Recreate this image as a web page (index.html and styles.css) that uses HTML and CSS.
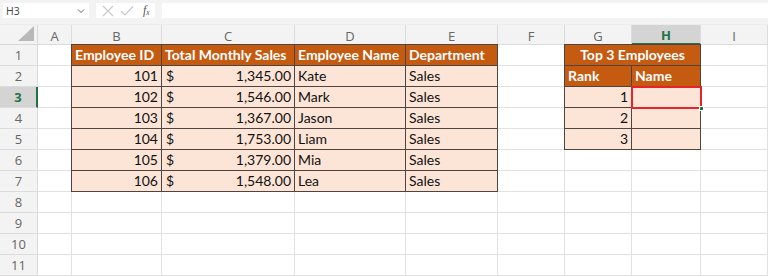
FILE: index.html
```html
<!DOCTYPE html>
<html>
<head>
<meta charset="utf-8">
<link rel="stylesheet" href="styles.css">
</head>
<body>
<div class="app">
  <div class="fbar">
    <div class="namebox"><span>H3</span>
      <svg class="chev" width="8" height="6" viewBox="0 0 8 6"><path d="M1 1.5 L4 4.5 L7 1.5" fill="none" stroke="#666" stroke-width="1"/></svg>
    </div>
    <div class="btns">
      <svg width="12" height="12" viewBox="0 0 12 12"><path d="M1 1 L11 11 M11 1 L1 11" stroke="#c8c8c8" stroke-width="1.1"/></svg>
      <svg width="14" height="12" viewBox="0 0 14 12"><path d="M1 6 L5 10 L13 1.5" fill="none" stroke="#c8c8c8" stroke-width="1.1"/></svg>
      <span class="fx"><i>f</i><sub>x</sub></span>
    </div>
    <div class="finput"></div>
  </div>
  <div class="sheet">
    <div class="corner"><svg width="16" height="15" viewBox="0 0 16 15"><path d="M16 0 L16 15 L0 15 Z" fill="#b8b8b8"/></svg></div>
    <div class="ch">A</div><div class="ch">B</div><div class="ch">C</div><div class="ch">D</div><div class="ch">E</div><div class="ch">F</div><div class="ch">G</div><div class="ch sel">H</div><div class="ch">I</div>

    <div class="rh">1</div><div class="c"></div>
    <div class="c hd b bl bt">Employee ID</div><div class="c hd b bt">Total Monthly Sales</div><div class="c hd b bt">Employee Name</div><div class="c hd b bt">Department</div>
    <div class="c"></div>
    <div class="c hd b bl bt span2 center">Top 3 Employees</div>
    <div class="c"></div>

    <div class="rh">2</div><div class="c"></div>
    <div class="c fl b bl num">101</div><div class="c fl b money"><span>$</span><span>1,345.00</span></div><div class="c fl b">Kate</div><div class="c fl b">Sales</div>
    <div class="c"></div>
    <div class="c hd b bl">Rank</div><div class="c hd b">Name</div>
    <div class="c"></div>

    <div class="rh rsel">3</div><div class="c"></div>
    <div class="c fl b bl num">102</div><div class="c fl b money"><span>$</span><span>1,546.00</span></div><div class="c fl b">Mark</div><div class="c fl b">Sales</div>
    <div class="c"></div>
    <div class="c fl b bl num">1</div><div class="c fl b"></div>
    <div class="c"></div>

    <div class="rh">4</div><div class="c"></div>
    <div class="c fl b bl num">103</div><div class="c fl b money"><span>$</span><span>1,367.00</span></div><div class="c fl b">Jason</div><div class="c fl b">Sales</div>
    <div class="c"></div>
    <div class="c fl b bl num">2</div><div class="c fl b"></div>
    <div class="c"></div>

    <div class="rh">5</div><div class="c"></div>
    <div class="c fl b bl num">104</div><div class="c fl b money"><span>$</span><span>1,753.00</span></div><div class="c fl b">Liam</div><div class="c fl b">Sales</div>
    <div class="c"></div>
    <div class="c fl b bl num">3</div><div class="c fl b"></div>
    <div class="c"></div>

    <div class="rh">6</div><div class="c"></div>
    <div class="c fl b bl num">105</div><div class="c fl b money"><span>$</span><span>1,379.00</span></div><div class="c fl b">Mia</div><div class="c fl b">Sales</div>
    <div class="c"></div><div class="c"></div><div class="c"></div><div class="c"></div>

    <div class="rh">7</div><div class="c"></div>
    <div class="c fl b bl num">106</div><div class="c fl b money"><span>$</span><span>1,548.00</span></div><div class="c fl b">Lea</div><div class="c fl b">Sales</div>
    <div class="c"></div><div class="c"></div><div class="c"></div><div class="c"></div>

    <div class="rh">8</div><div class="c"></div><div class="c"></div><div class="c"></div><div class="c"></div><div class="c"></div><div class="c"></div><div class="c"></div><div class="c"></div><div class="c"></div>
    <div class="rh">9</div><div class="c"></div><div class="c"></div><div class="c"></div><div class="c"></div><div class="c"></div><div class="c"></div><div class="c"></div><div class="c"></div><div class="c"></div>
    <div class="rh">10</div><div class="c"></div><div class="c"></div><div class="c"></div><div class="c"></div><div class="c"></div><div class="c"></div><div class="c"></div><div class="c"></div><div class="c"></div>
    <div class="rh">11</div><div class="c"></div><div class="c"></div><div class="c"></div><div class="c"></div><div class="c"></div><div class="c"></div><div class="c"></div><div class="c"></div><div class="c"></div>

    <div class="selbox"><div class="handle"></div></div>
  </div>
</div>
</body>
</html>
```

FILE: styles.css
```css
* { box-sizing: border-box; }
html, body { margin: 0; padding: 0; background: #fff; }
body { width: 768px; height: 276px; overflow: hidden; font-family: Lato, "Liberation Sans", sans-serif; }

.app { display: flex; flex-direction: column; }

.fbar {
  height: 25px;
  background: #f3f3f3;
  display: flex;
  align-items: flex-start;
  padding: 3px 0 0 3px;
  gap: 7px;
  border-bottom: 1px solid #ececec;
}
.namebox {
  width: 86px; height: 15px; background: #fff;
  display: flex; align-items: center; justify-content: space-between;
  padding: 0 4px 0 3px;
  font-family: "Open Sans", "Noto Sans", sans-serif; font-size: 10.5px; color: #444;
}
.chev { margin-top: 1px; }
.btns {
  width: 59px; height: 15px; background: #fff;
  display: flex; align-items: center; gap: 6px; padding-left: 6px;
}
.fx { font-family: "Liberation Serif", serif; font-size: 12px; color: #555; line-height: 1; margin-left: 3px; }
.fx sub { font-size: 7.5px; vertical-align: -1px; font-style: italic; }
.finput { flex: 1; height: 15px; background: #fff; }

.sheet {
  position: relative;
  display: grid;
  grid-template-columns: 38px 34px 90px 133px 111px 92px 67px 67px 69px 67px;
  grid-template-rows: 20px repeat(11, 21px);
}
.corner {
  background: #f3f3f3;
  border-right: 1px solid #d8d8d8; border-bottom: 1px solid #d8d8d8;
  display: flex; align-items: flex-end; justify-content: flex-end;
  padding: 0 3px 3px 0;
}
.ch, .rh {
  background: #f3f3f3;
  color: #666;
  font-family: "Open Sans", "Noto Sans", sans-serif;
  font-size: 13px;
  display: flex; align-items: center; justify-content: center;
  border-right: 1px solid #dcdcdc; border-bottom: 1px solid #dcdcdc;
}
.ch { padding-top: 2px; }
.ch.sel { background: #d4d4d4; color: #217346; font-weight: 700; border-bottom: 2px solid #217346; }
.rh.rsel { background: #d4d4d4; color: #217346; font-weight: 700; border-right: 2px solid #217346; }

.c {
  border-right: 1px solid #e1e1e1; border-bottom: 1px solid #e1e1e1;
  font-size: 14px; color: #111;
  display: flex; align-items: flex-end;
  padding: 0 3px 1px 3px;
  line-height: 19px;
  white-space: nowrap; overflow: visible;
}
.hd { background: #c55a11; color: #fff; font-weight: 700; }
.fl { background: #fce4d6; }
.b { border-right-color: #4e4440; border-bottom-color: #4e4440; }
.bl { box-shadow: -1px 0 0 #4e4440; }
.bt { box-shadow: 0 -1px 0 #4e4440; }
.bl.bt { box-shadow: -1px 0 0 #4e4440, 0 -1px 0 #4e4440, -1px -1px 0 #4e4440; }
.num { justify-content: flex-end; }
.money { justify-content: space-between; padding-left: 4px; }
.span2 { grid-column: span 2; }
.center { justify-content: center; }

.selbox {
  position: absolute;
  left: 631px; top: 61px;
  width: 71px; height: 23px;
  border: 2px solid #e5232b;
}
.handle {
  position: absolute; right: -4px; bottom: -4px;
  width: 5px; height: 5px; background: #217346; border: 1px solid #fff;
}
```
